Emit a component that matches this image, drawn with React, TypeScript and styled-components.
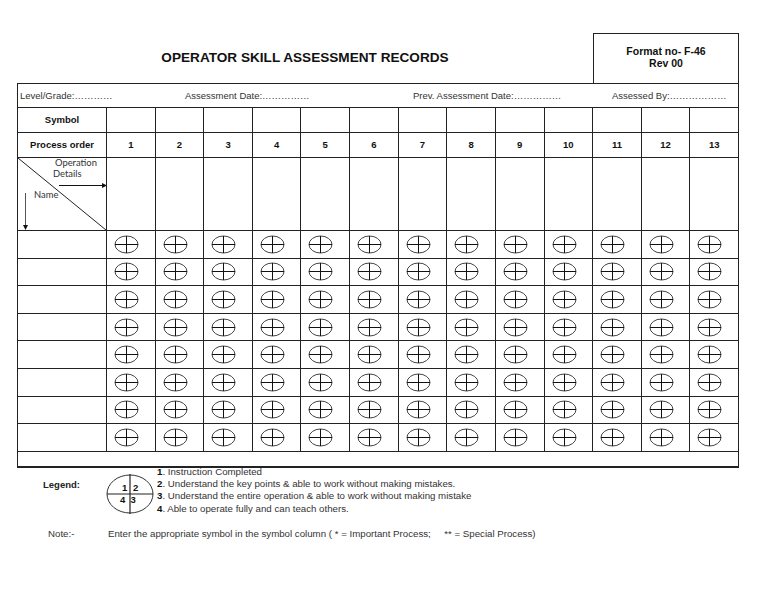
import React from "react";
import styled, { createGlobalStyle } from "styled-components";

const Global = createGlobalStyle`
  html, body { margin: 0; padding: 0; background: #fff; }
  body { font-family: "Liberation Sans", Arial, sans-serif; color: #222; }
`;

const Page = styled.div`
  padding: 33px 0 0 17px;
  width: 722px;
`;

const Header = styled.div`
  display: flex;
  height: 50px;
`;

const Title = styled.h1`
  flex: 1;
  margin: 0;
  display: flex;
  align-items: center;
  justify-content: center;
  font-size: 13.6px;
  font-weight: bold;
  color: #111;
  padding-bottom: 1px;
`;

const FormatBox = styled.div`
  width: 146px;
  box-sizing: border-box;
  border: 1px solid #222;
  border-bottom: none;
  display: flex;
  flex-direction: column;
  align-items: center;
  justify-content: center;
  font-size: 10.5px;
  font-weight: bold;
  line-height: 12px;
  color: #111;
  padding-bottom: 3px;
`;

const Grid = styled.div`
  display: grid;
  grid-template-columns: 89px repeat(13, 1fr);
  grid-template-rows: 24px 25px 25px 73px repeat(8, 27.6px) 16px;
  border-top: 1px solid #222;
  border-left: 1px solid #222;
`;

const Cell = styled.div<{ $bold?: boolean; $left?: boolean }>`
  box-sizing: border-box;
  border-right: 1px solid #222;
  border-bottom: 1px solid #222;
  display: flex;
  align-items: center;
  justify-content: ${(p) => (p.$left ? "flex-start" : "center")};
  padding-left: ${(p) => (p.$left ? "7px" : "0")};
  padding-bottom: ${(p) => (p.$bold ? "2px" : "0")};
  font-size: 9.5px;
  font-weight: ${(p) => (p.$bold ? "bold" : "normal")};
  color: #111;
`;

const InfoRow = styled.div`
  grid-column: 1 / -1;
  box-sizing: border-box;
  border-right: 1px solid #222;
  border-bottom: 1px solid #222;
  display: grid;
  grid-template-columns: 165px 228px 199px 1fr;
  align-items: center;
  padding-left: 2px;
  padding-bottom: 1px;
  font-size: 9.5px;
  color: #333;
`;

const BlankRow = styled.div`
  grid-column: 1 / -1;
  box-sizing: border-box;
  border-right: 1px solid #222;
  border-bottom: 2px solid #222;
`;

const DiagCell = styled.div`
  position: relative;
  box-sizing: border-box;
  border-right: 1px solid #222;
  border-bottom: 1px solid #222;
`;

const DiagSvg = styled.svg`
  position: absolute;
  left: 0;
  top: 0;
  width: 88px;
  height: 72px;
`;

const DiagLabel = styled.span<{ $x: number; $y: number }>`
  position: absolute;
  left: ${(p) => p.$x}px;
  top: ${(p) => p.$y}px;
  font-family: Lato, "Liberation Sans", sans-serif;
  font-size: 9.4px;
  line-height: 11px;
  color: #333;
  white-space: nowrap;
`;

const Legend = styled.div`
  display: flex;
  align-items: flex-start;
`;

const LegendLabel = styled.div`
  width: 89px;
  padding-top: 11px;
  text-align: center;
  font-size: 9.5px;
  font-weight: bold;
  color: #222;
`;

const LegendList = styled.div`
  margin-left: 1px;
  margin-top: -2px;
  display: flex;
  flex-direction: column;
  font-size: 9.7px;
  line-height: 12.3px;
  color: #333;
  b { color: #111; }
`;

const NoteRow = styled.div`
  display: flex;
  margin-top: 13px;
  font-size: 9.7px;
  color: #333;
`;

const NoteLabel = styled.div`
  width: 91px;
  padding-left: 31px;
  box-sizing: border-box;
`;

const Pre = styled.span`
  white-space: pre;
`;

const Mark = () => (
  <svg width="25" height="19" viewBox="0 0 25 19">
    <ellipse cx="12.5" cy="9.5" rx="11.5" ry="8.5" fill="none" stroke="#444" strokeWidth="1" />
    <line x1="12.5" y1="1" x2="12.5" y2="18" stroke="#111" strokeWidth="1" />
    <line x1="1" y1="9.5" x2="24" y2="9.5" stroke="#111" strokeWidth="1" />
  </svg>
);

const LegendMark = () => (
  <svg width="50" height="42" viewBox="0 0 50 42" style={{ marginTop: 5 }}>
    <ellipse cx="24" cy="21" rx="23" ry="19" fill="none" stroke="#333" strokeWidth="1" />
    <line x1="24" y1="1" x2="24" y2="41" stroke="#222" strokeWidth="1.2" />
    <line x1="1" y1="21" x2="47" y2="21" stroke="#222" strokeWidth="1.2" />
    <text x="16" y="18" fontSize="9.5" fontWeight="bold" fontFamily="Liberation Sans, Arial, sans-serif" fill="#111">1</text>
    <text x="27" y="18" fontSize="9.5" fontWeight="bold" fontFamily="Liberation Sans, Arial, sans-serif" fill="#111">2</text>
    <text x="14" y="30" fontSize="9.5" fontWeight="bold" fontFamily="Liberation Sans, Arial, sans-serif" fill="#111">4</text>
    <text x="24.5" y="30" fontSize="9.5" fontWeight="bold" fontFamily="Liberation Sans, Arial, sans-serif" fill="#111">3</text>
  </svg>
);

const cols = Array.from({ length: 13 }, (_, i) => i + 1);
const rows = Array.from({ length: 8 }, (_, i) => i);

export default function App() {
  return (
    <>
      <Global />
      <Page>
        <Header>
          <Title>OPERATOR SKILL ASSESSMENT RECORDS</Title>
          <FormatBox>
            <span>Format no- F-46</span>
            <span>Rev 00</span>
          </FormatBox>
        </Header>
        <Grid>
          <InfoRow>
            <span>Level/Grade:…………</span>
            <span>Assessment Date:……………</span>
            <span>Prev. Assessment Date:……………</span>
            <span>Assessed By:………………</span>
          </InfoRow>
          <Cell $bold>Symbol</Cell>
          {cols.map((c) => (
            <Cell key={"s" + c} />
          ))}
          <Cell $bold>Process order</Cell>
          {cols.map((c) => (
            <Cell key={"p" + c} $bold>
              {c}
            </Cell>
          ))}
          <DiagCell>
            <DiagSvg viewBox="0 0 88 72">
              <line x1="0" y1="0" x2="88" y2="72" stroke="#222" strokeWidth="1" />
              <line x1="41" y1="27.5" x2="85" y2="27.5" stroke="#111" strokeWidth="1" />
              <polygon points="84,25 89,27.5 84,30" fill="#111" />
              <line x1="7.5" y1="35" x2="7.5" y2="68" stroke="#555" strokeWidth="1" />
              <polygon points="5,67 10,67 7.5,72" fill="#111" />
            </DiagSvg>
            <DiagLabel $x={37} $y={-1}>Operation</DiagLabel>
            <DiagLabel $x={35} $y={10}>Details</DiagLabel>
            <DiagLabel $x={16} $y={31}>Name</DiagLabel>
          </DiagCell>
          {cols.map((c) => (
            <Cell key={"h" + c} />
          ))}
          {rows.map((r) => (
            <React.Fragment key={"r" + r}>
              <Cell />
              {cols.map((c) => (
                <Cell key={c} $left>
                  <Mark />
                </Cell>
              ))}
            </React.Fragment>
          ))}
          <BlankRow />
        </Grid>
        <Legend>
          <LegendLabel>Legend:</LegendLabel>
          <LegendMark />
          <LegendList>
            <span>
              <b>1</b>. Instruction Completed
            </span>
            <span>
              <b>2</b>. Understand the key points &amp; able to work without making mistakes.
            </span>
            <span>
              <b>3</b>. Understand the entire operation &amp; able to work without making mistake
            </span>
            <span>
              <b>4</b>. Able to operate fully and can teach others.
            </span>
          </LegendList>
        </Legend>
        <NoteRow>
          <NoteLabel>Note:-</NoteLabel>
          <Pre>Enter the appropriate symbol in the symbol column ( * = Important Process;     ** = Special Process)</Pre>
        </NoteRow>
      </Page>
    </>
  );
}
